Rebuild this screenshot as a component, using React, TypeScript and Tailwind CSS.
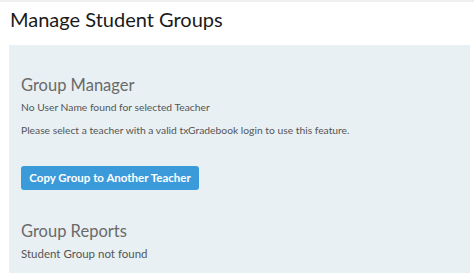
export default function App() {
  return (
    <div
      className="w-[474px] h-[273px] bg-white border-t-2 border-[#efefef] flex flex-col overflow-hidden"
      style={{ fontFamily: "Lato, 'Open Sans', sans-serif" }}
    >
      <div className="flex flex-col flex-1 pl-[9px] pr-[4px]">
        <div className="h-[43px] flex items-start">
          <h1 className="text-[20px] leading-[24px] mt-[5px] ml-[1px] text-[#1a1a1a] font-normal">
            Manage Student Groups
          </h1>
        </div>
        <div className="flex-1 bg-[#e8f0f3] pl-[12px] pt-[30px]">
          <h2 className="text-[16.5px] leading-[20px] text-[#6a6a6a]">Group Manager</h2>
          <p className="text-[10.3px] leading-[12px] text-[#555] mt-[6px]">
            No User Name found for selected Teacher
          </p>
          <p className="text-[10.3px] leading-[12px] text-[#555] mt-[11px]">
            Please select a teacher with a valid txGradebook login to use this feature.
          </p>
          <button className="mt-[30px] h-[24px] w-[178px] rounded-[3px] bg-[#3b9ad9] text-white text-[11.5px] font-bold flex items-center justify-center">
            Copy Group to Another Teacher
          </button>
          <h2 className="text-[16.5px] leading-[20px] text-[#6a6a6a] mt-[31px]">Group Reports</h2>
          <p className="text-[11.5px] leading-[14px] text-[#555] mt-[6px]">Student Group not found</p>
        </div>
      </div>
    </div>
  );
}
